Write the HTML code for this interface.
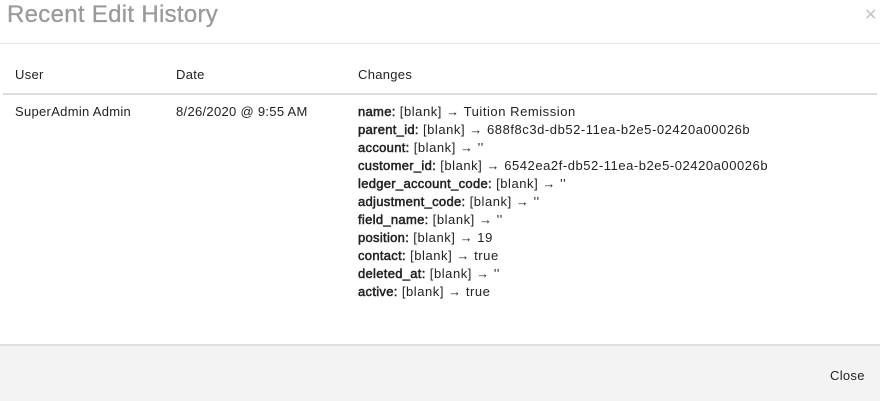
<!DOCTYPE html>
<html><head><style>
body{margin:0;width:880px;height:401px;background:#fff;font-family:"Liberation Sans",sans-serif;position:relative;overflow:hidden;color:#222}
.title{position:absolute;left:7px;top:0px;font-size:24px;color:#9a9a9a;line-height:30px;letter-spacing:0.3px;-webkit-text-stroke:0.3px #9a9a9a}
.x{position:absolute;left:864px;top:5px;font-size:16px;color:#c4c4c4}
.hl{position:absolute;left:0;width:880px;top:43px;height:1px;background:#e8e8e8}
.th{position:absolute;top:67px;font-size:13px;line-height:16px;color:#222;letter-spacing:0.3px}
.tl{position:absolute;left:3px;width:874px;top:93px;height:2px;background:#ddd}
.td{position:absolute;top:103px;font-size:13px;line-height:18px;color:#222;letter-spacing:0.55px}
b{font-weight:normal;color:#222;-webkit-text-stroke:0.5px #222;letter-spacing:0.3px}
.foot{position:absolute;left:0;top:344px;width:880px;height:57px;background:#f3f3f3;border-top:2px solid #e0e0e0;box-sizing:border-box}
.close{position:absolute;left:830px;top:368px;font-size:13px;color:#222;letter-spacing:0.3px}
</style></head><body>
<div class="title">Recent Edit History</div>
<div class="x">✕</div>
<div class="hl"></div>
<div class="th" style="left:15px">User</div>
<div class="th" style="left:176px">Date</div>
<div class="th" style="left:358px">Changes</div>
<div class="tl"></div>
<div class="td" style="left:15px;letter-spacing:0.3px">SuperAdmin Admin</div>
<div class="td" style="left:176px;letter-spacing:0.3px">8/26/2020 @ 9:55 AM</div>
<div class="td" style="left:358px">
<b>name:</b> [blank] → Tuition Remission<br>
<b>parent_id:</b> [blank] → 688f8c3d-db52-11ea-b2e5-02420a00026b<br>
<b>account:</b> [blank] → ''<br>
<b>customer_id:</b> [blank] → 6542ea2f-db52-11ea-b2e5-02420a00026b<br>
<b>ledger_account_code:</b> [blank] → ''<br>
<b>adjustment_code:</b> [blank] → ''<br>
<b>field_name:</b> [blank] → ''<br>
<b>position:</b> [blank] → 19<br>
<b>contact:</b> [blank] → true<br>
<b>deleted_at:</b> [blank] → ''<br>
<b>active:</b> [blank] → true
</div>
<div class="foot"></div>
<div class="close">Close</div>
</body></html>
